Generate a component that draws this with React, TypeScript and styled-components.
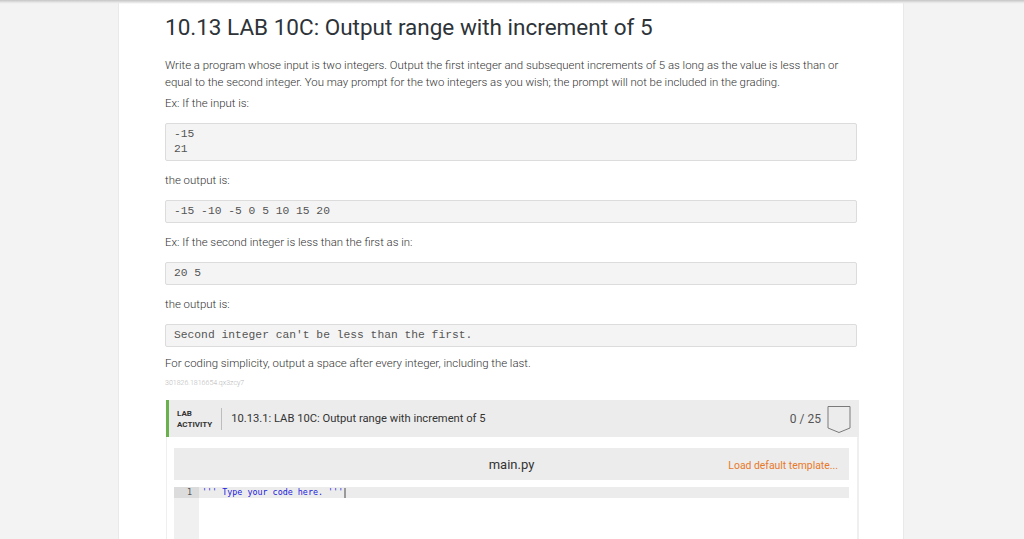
import React from "react";
import styled, { createGlobalStyle } from "styled-components";

const GlobalStyle = createGlobalStyle`
  html, body { margin: 0; padding: 0; }
  body {
    background: #f3f3f3;
    font-family: Roboto, "Liberation Sans", sans-serif;
    color: #333;
    overflow: hidden;
  }
`;

const TopShade = styled.div`
  position: fixed;
  top: 0;
  left: 0;
  right: 0;
  height: 4px;
  background: linear-gradient(#c4c4c4, #ececec 70%, rgba(240, 240, 240, 0));
  z-index: 5;
`;

const Column = styled.main`
  width: 784px;
  margin: 0 auto;
  position: relative;
  left: -1px;
  min-height: 539px;
  background: #fff;
  box-shadow: 0 0 0 1px #e9e9e9;
  padding: 14px 46px 0;
  box-sizing: border-box;
`;

const Title = styled.h1`
  margin: 0;
  font-size: 22.5px;
  line-height: 26px;
  font-weight: 400;
  color: #2d3338;
`;

const Para = styled.p<{ $top?: number }>`
  margin: ${(p) => (p.$top ?? 11)}px 0 0;
  font-size: 11.4px;
  line-height: 17px;
  font-weight: 300;
  color: #333;
`;

const Pre = styled.pre`
  margin: 11px 0 0;
  padding: 3px 8px;
  background: #f4f4f4;
  border: 1px solid #dcdcdc;
  border-radius: 2px;
  font-family: "Liberation Mono", "Courier New", monospace;
  font-size: 11.3px;
  line-height: 15px;
  color: #555;
`;

const IdLine = styled.div`
  margin-top: 6px;
  font-size: 7px;
  line-height: 10px;
  color: #b8b8b8;
  font-weight: 300;
`;

const LabBox = styled.section`
  margin: 12px -2px 0 1px;
  border-right: 2px solid #efefef;
  border-left: 1px solid #efefef;
`;

const LabHeader = styled.header`
  display: flex;
  align-items: center;
  height: 37px;
  background: #ececec;
  border-left: 3px solid #6ab04c;
  margin-left: -1px;
  margin-right: -2px;
  padding: 0 8px 0 8px;
`;

const LabLabel = styled.div`
  font-size: 8px;
  line-height: 11px;
  font-weight: 700;
  color: #333;
  padding-right: 9px;
  border-right: 1px solid #bdbdbd;
  margin-right: 9px;
`;

const LabTitle = styled.div`
  flex: 1;
  font-size: 11.2px;
  color: #333;
`;

const Score = styled.div`
  font-size: 12px;
  color: #555;
  margin-right: 6px;
`;

const Badge = styled.svg`
  width: 24px;
  height: 28px;
  display: block;
  margin-top: 2px;
`;

const LabBody = styled.div`
  padding: 11px 8px 0 7px;
`;

const Editor = styled.div`
  background: #fff;
`;

const EditorHeader = styled.div`
  position: relative;
  display: flex;
  align-items: center;
  justify-content: center;
  height: 32px;
  background: #ececec;
`;

const FileName = styled.div`
  font-size: 13px;
  color: #333;
`;

const LoadLink = styled.a`
  position: absolute;
  right: 11px;
  top: 11px;
  font-size: 10.4px;
  color: #e8782a;
  text-decoration: none;
`;

const CodeArea = styled.div`
  display: grid;
  grid-template-columns: 25px 1fr;
  margin-top: 7px;
  min-height: 60px;
`;

const Gutter = styled.div`
  background: #f0f0f0;
`;

const LineNo = styled.div<{ $active?: boolean }>`
  height: 11px;
  background: ${(p) => (p.$active ? "#dcdcdc" : "transparent")};
  font-family: "DejaVu Sans Mono", monospace;
  font-size: 8.4px;
  line-height: 11px;
  text-align: right;
  padding-right: 7px;
  color: #555;
`;

const Lines = styled.div``;

const CodeLine = styled.div<{ $active?: boolean }>`
  height: 11px;
  background: ${(p) => (p.$active ? "#ececec" : "transparent")};
  font-family: "DejaVu Sans Mono", monospace;
  font-size: 8.4px;
  line-height: 11px;
  white-space: pre;
  padding-left: 3px;
  color: #2222dd;
  display: flex;
  align-items: center;
`;

const Cursor = styled.span`
  display: inline-block;
  width: 2px;
  height: 10px;
  background: #9a9a9a;
  margin-left: 1px;
`;

export default function App() {
  return (
    <>
      <GlobalStyle />
      <TopShade />
      <Column>
        <Title>10.13 LAB 10C: Output range with increment of 5</Title>
        <Para $top={17}>
          Write a program whose input is two integers. Output the first integer and subsequent
          increments of 5 as long as the value is less than or equal to the second integer. You may
          prompt for the two integers as you wish; the prompt will not be included in the grading.
        </Para>
        <Para $top={4}>Ex: If the input is:</Para>
        <Pre>{"-15\n21"}</Pre>
        <Para>the output is:</Para>
        <Pre>-15 -10 -5 0 5 10 15 20</Pre>
        <Para>Ex: If the second integer is less than the first as in:</Para>
        <Pre>20 5</Pre>
        <Para>the output is:</Para>
        <Pre>Second integer can't be less than the first.</Pre>
        <Para $top={8}>
          For coding simplicity, output a space after every integer, including the last.
        </Para>
        <IdLine>301826.1816654.qx3zcy7</IdLine>
        <LabBox>
          <LabHeader>
            <LabLabel>
              LAB
              <br />
              ACTIVITY
            </LabLabel>
            <LabTitle>10.13.1: LAB 10C: Output range with increment of 5</LabTitle>
            <Score>0 / 25</Score>
            <Badge viewBox="0 0 24 28">
              <path d="M1 0.5 H23 V22 L12 26.5 L1 22 Z" fill="none" stroke="#7a7a7a" strokeWidth="1" />
            </Badge>
          </LabHeader>
          <LabBody>
            <Editor>
              <EditorHeader>
                <FileName>main.py</FileName>
                <LoadLink href="#">Load default template...</LoadLink>
              </EditorHeader>
              <CodeArea>
                <Gutter>
                  <LineNo $active>1</LineNo>
                </Gutter>
                <Lines>
                  <CodeLine $active>
                    {"''' Type your code here. '''"}
                    <Cursor />
                  </CodeLine>
                </Lines>
              </CodeArea>
            </Editor>
          </LabBody>
        </LabBox>
      </Column>
    </>
  );
}
